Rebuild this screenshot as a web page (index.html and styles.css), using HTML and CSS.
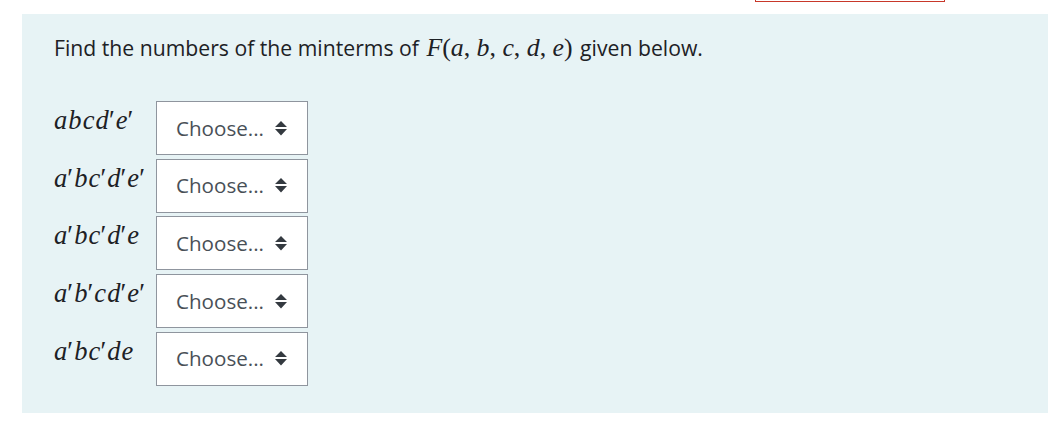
FILE: index.html
```html
<!DOCTYPE html>
<html>
<head>
<meta charset="utf-8">
<link rel="stylesheet" href="styles.css">
</head>
<body>
<div class="topbar"><div class="flag"></div></div>
<div class="panel">
  <p class="intro">Find the numbers of the minterms of <span class="math"><i>F</i>(<i>a</i>, <i>b</i>, <i>c</i>, <i>d</i>, <i>e</i>)</span> given below.</p>
  <div class="rows">
    <div class="row">
      <div class="label math"><i>abcd</i><span class="p">′</span><i>e</i><span class="p">′</span></div>
      <div class="select"><span>Choose...</span><svg class="arrows" viewBox="0 0 12 15"><path d="M6 0 L12 6 L0 6 Z M0 8 L12 8 L6 14.5 Z"/></svg></div>
    </div>
    <div class="row">
      <div class="label math"><i>a</i><span class="p">′</span><i>bc</i><span class="p">′</span><i>d</i><span class="p">′</span><i>e</i><span class="p">′</span></div>
      <div class="select"><span>Choose...</span><svg class="arrows" viewBox="0 0 12 15"><path d="M6 0 L12 6 L0 6 Z M0 8 L12 8 L6 14.5 Z"/></svg></div>
    </div>
    <div class="row">
      <div class="label math"><i>a</i><span class="p">′</span><i>bc</i><span class="p">′</span><i>d</i><span class="p">′</span><i>e</i></div>
      <div class="select"><span>Choose...</span><svg class="arrows" viewBox="0 0 12 15"><path d="M6 0 L12 6 L0 6 Z M0 8 L12 8 L6 14.5 Z"/></svg></div>
    </div>
    <div class="row">
      <div class="label math"><i>a</i><span class="p">′</span><i>b</i><span class="p">′</span><i>cd</i><span class="p">′</span><i>e</i><span class="p">′</span></div>
      <div class="select"><span>Choose...</span><svg class="arrows" viewBox="0 0 12 15"><path d="M6 0 L12 6 L0 6 Z M0 8 L12 8 L6 14.5 Z"/></svg></div>
    </div>
    <div class="row">
      <div class="label math"><i>a</i><span class="p">′</span><i>bc</i><span class="p">′</span><i>de</i></div>
      <div class="select"><span>Choose...</span><svg class="arrows" viewBox="0 0 12 15"><path d="M6 0 L12 6 L0 6 Z M0 8 L12 8 L6 14.5 Z"/></svg></div>
    </div>
  </div>
</div>
</body>
</html>
```

FILE: styles.css
```css
html, body {
  margin: 0;
  padding: 0;
  background: #ffffff;
}
body {
  font-family: "Open Sans", "Noto Sans", sans-serif;
  color: #1d2125;
}
.topbar {
  height: 14px;
}
.flag {
  margin-left: 755px;
  width: 188px;
  height: 1px;
  border: 1px solid #c8382a;
  border-top: 0;
}
.panel {
  margin-left: 22px;
  background: #e7f3f5;
  height: 399px;
  box-sizing: border-box;
  padding: 18px 32px 0 32px;
}
.intro {
  margin: 0;
  font-size: 21.2px;
  line-height: 32px;
  white-space: nowrap;
}
.intro .math {
  font-size: 25.8px;
  margin-left: 2px;
  margin-right: 2px;
}
.math {
  font-family: "Liberation Serif", "DejaVu Serif", serif;
  font-size: 26.5px;
}
.math i {
  font-style: italic;
}
.rows {
  margin-top: 37px;
  display: flex;
  flex-direction: column;
  gap: 3.7px;
}
.row {
  display: flex;
  align-items: flex-start;
}
.label {
  width: 102px;
  padding-top: 5px;
  line-height: 28px;
  white-space: nowrap;
  letter-spacing: 1.1px;
}
.label .p {
  letter-spacing: 0;
  margin-left: -1px;
  margin-right: 1px;
}
.select {
  width: 152px;
  height: 54px;
  box-sizing: border-box;
  border: 1px solid #8f959e;
  background: #ffffff;
  display: flex;
  align-items: center;
  padding-left: 19px;
  color: #495057;
  font-size: 20.6px;
}
.select span {
  flex: 1;
  padding-bottom: 1px;
  white-space: nowrap;
}
.arrows {
  width: 12px;
  height: 15px;
  margin-right: 20px;
  fill: #343a40;
}
```
